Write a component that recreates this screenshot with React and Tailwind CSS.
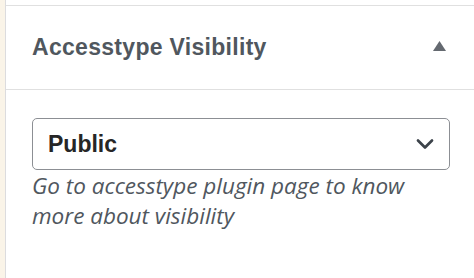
import { ChevronDown } from 'lucide-react';

const VisibilityPanel = () => {
  return (
    <div className="flex-1 bg-white border-l border-[#dcdcde] pt-[5px]">
      <div className="flex items-center justify-between h-[85px] border-t border-b border-[#e0e0e0] pl-[26px] pr-[28px]">
        <h2 className="text-[23px] font-bold text-[#50575e] tracking-[0.3px]" style={{ fontFamily: '"Liberation Sans", Arial, sans-serif' }}>
          Accesstype Visibility
        </h2>
        <svg width="13" height="10" viewBox="0 0 13 10" className="mb-[3px]">
          <polygon points="6.5,0 13,10 0,10" fill="#646970" />
        </svg>
      </div>

      <div className="pt-[28px] pl-[26px] pr-[24px]">
        <div className="flex items-center justify-between h-[52px] rounded-[5px] border border-[#8c8f94] pl-[15px] pr-[10px]">
          <span className="text-[23px] font-bold text-[#262626]" style={{ fontFamily: '"Liberation Sans", Arial, sans-serif' }}>
            Public
          </span>
          <ChevronDown size={28} strokeWidth={2.3} className="text-[#3c434a]" />
        </div>
        <p className="mt-[1px] text-[22.5px] leading-[30px] italic text-[#50575e]" style={{ fontFamily: '"Open Sans", sans-serif' }}>
          Go to accesstype plugin page to know more about visibility
        </p>
      </div>
    </div>
  );
};

export default function App() {
  return (
    <div className="w-[474px] h-[278px] flex bg-[#faf4e8] overflow-hidden">
      <div className="w-[5px] shrink-0" />
      <VisibilityPanel />
    </div>
  );
}
